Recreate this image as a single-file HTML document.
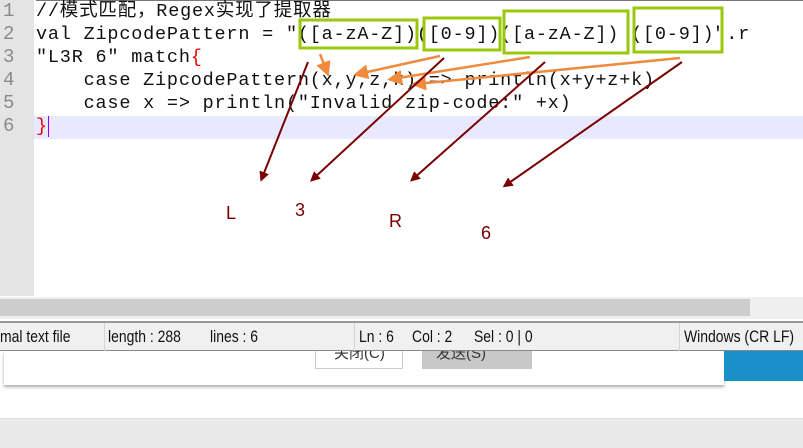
<!DOCTYPE html>
<html><head><meta charset="utf-8"><style>
*{margin:0;padding:0;box-sizing:border-box}
body{width:803px;height:448px;overflow:hidden;background:#fff;position:relative;font-family:"Liberation Sans","Noto Sans CJK SC",sans-serif}
#gut{position:absolute;left:0;top:0;width:34px;height:296px;background:#e4e4e4}
#gut div{height:23px;line-height:23px;font:19px "Liberation Mono",monospace;color:#8a8a8a;padding-left:3px}
#code{position:absolute;left:36px;top:0;width:767px;height:296px;border-top:1px solid #777}
.ln{height:23px;line-height:23px;font:18.5px "Liberation Mono","Noto Sans CJK SC",monospace;letter-spacing:0.8px;color:#111;white-space:pre;overflow:visible}
.hl{background:#e8e8ff;margin-left:-2px;padding-left:2px}
.r{color:#e00}
#sb{position:absolute;left:0;top:297px;width:803px;height:22px;background:#efefef}
#sb div{position:absolute;left:0;top:2px;width:750px;height:17px;background:#cdcdcd}
#st{position:absolute;left:0;top:321px;width:803px;height:30px;background:#f0f0f0;border-top:2px solid #999;border-bottom:1px solid #888;font-size:17px;color:#111}
#st span{position:absolute;top:4px;white-space:nowrap;transform:scaleX(0.82);transform-origin:0 0}
.sep{position:absolute;top:0;width:1px;height:28px;background:#d6d6d6}
.lab{position:absolute;color:#7a0000;font-size:18px}
</style></head><body>
<div id="gut"><div>1</div><div>2</div><div>3</div><div>4</div><div>5</div><div>6</div></div>
<div id="code">
<div class="ln" style="position:relative;top:-5px">//模式匹配，Regex实现了提取器</div>
<div class="ln">val ZipcodePattern = "([a-zA-Z])([0-9])([a-zA-Z]) ([0-9])".r</div>
<div class="ln">"L3R 6" match<span class="r">{</span></div>
<div class="ln">    case ZipcodePattern(x,y,z,k) => println(x+y+z+k)</div>
<div class="ln">    case x => println("Invalid zip-code:" +x)</div>
<div class="ln hl"><span class="r">}</span><span style="border-left:1px solid #80f"></span></div>
</div>
<svg style="position:absolute;left:0;top:0" width="803" height="300">
<defs>
<marker id="o" markerWidth="6" markerHeight="6" refX="4" refY="3" orient="auto"><path d="M0,0L6,3L0,6z" fill="#f08a3c"/></marker>
<marker id="d" markerWidth="5" markerHeight="5" refX="3" refY="2.5" orient="auto"><path d="M0,0L5,2.5L0,5z" fill="#7a0000"/></marker>
</defs>
<g fill="none" stroke="#99c90a" stroke-width="3">
<rect x="300" y="20" width="117" height="28"/>
<rect x="424" y="18" width="76" height="32"/>
<rect x="504" y="11" width="124" height="42"/>
<rect x="634" y="8" width="88" height="44"/>
</g>
<g stroke="#f08a3c" stroke-width="2.5" marker-end="url(#o)">
<line x1="320" y1="54" x2="327" y2="72"/>
<line x1="440" y1="56" x2="358" y2="74"/>
<line x1="530" y1="57" x2="392" y2="79"/>
<line x1="680" y1="58" x2="416" y2="84"/>
</g>
<g stroke="#7a0000" stroke-width="2" marker-end="url(#d)">
<line x1="308" y1="62" x2="262" y2="178"/>
<line x1="444" y1="58" x2="313" y2="179"/>
<line x1="545" y1="62" x2="413" y2="179"/>
<line x1="682" y1="62" x2="506" y2="185"/>
</g>
</svg>
<div class="lab" style="left:226px;top:203px">L</div>
<div class="lab" style="left:295px;top:200px">3</div>
<div class="lab" style="left:389px;top:211px">R</div>
<div class="lab" style="left:481px;top:223px">6</div>
<div id="sb"><div></div></div>
<div style="position:absolute;left:0;top:351px;width:803px;height:97px;background:#fff"></div>
<div style="position:absolute;left:4px;top:351px;width:720px;height:34px;background:#fff;box-shadow:0 2px 3px #aaa"></div>
<div style="position:absolute;left:315px;top:351px;width:88px;height:18px;border:1px solid #ccc;border-top:0;background:#fff;overflow:hidden"><div style="position:absolute;left:18px;top:-9px;font-size:15px;color:#333">关闭(C)</div></div>
<div style="position:absolute;left:422px;top:351px;width:110px;height:18px;background:#c8c8c8;overflow:hidden"><div style="position:absolute;left:14px;top:-9px;font-size:15px;color:#333">发送(S)</div></div>
<div style="position:absolute;left:724px;top:351px;width:79px;height:30px;background:#1990c8"></div>
<div style="position:absolute;left:0;top:418px;width:803px;height:30px;background:#e9e9e9;border-top:1px solid #ddd"></div>
<div id="st">
<span style="left:0">mal text file</span><div class="sep" style="left:104px"></div>
<span style="left:108px">length : 288</span><span style="left:210px">lines : 6</span>
<div class="sep" style="left:354px"></div>
<span style="left:359px">Ln : 6</span><span style="left:412px">Col : 2</span><span style="left:474px">Sel : 0 | 0</span>
<div class="sep" style="left:679px"></div>
<span style="left:684px">Windows (CR LF)</span>
</div>
</body></html>
